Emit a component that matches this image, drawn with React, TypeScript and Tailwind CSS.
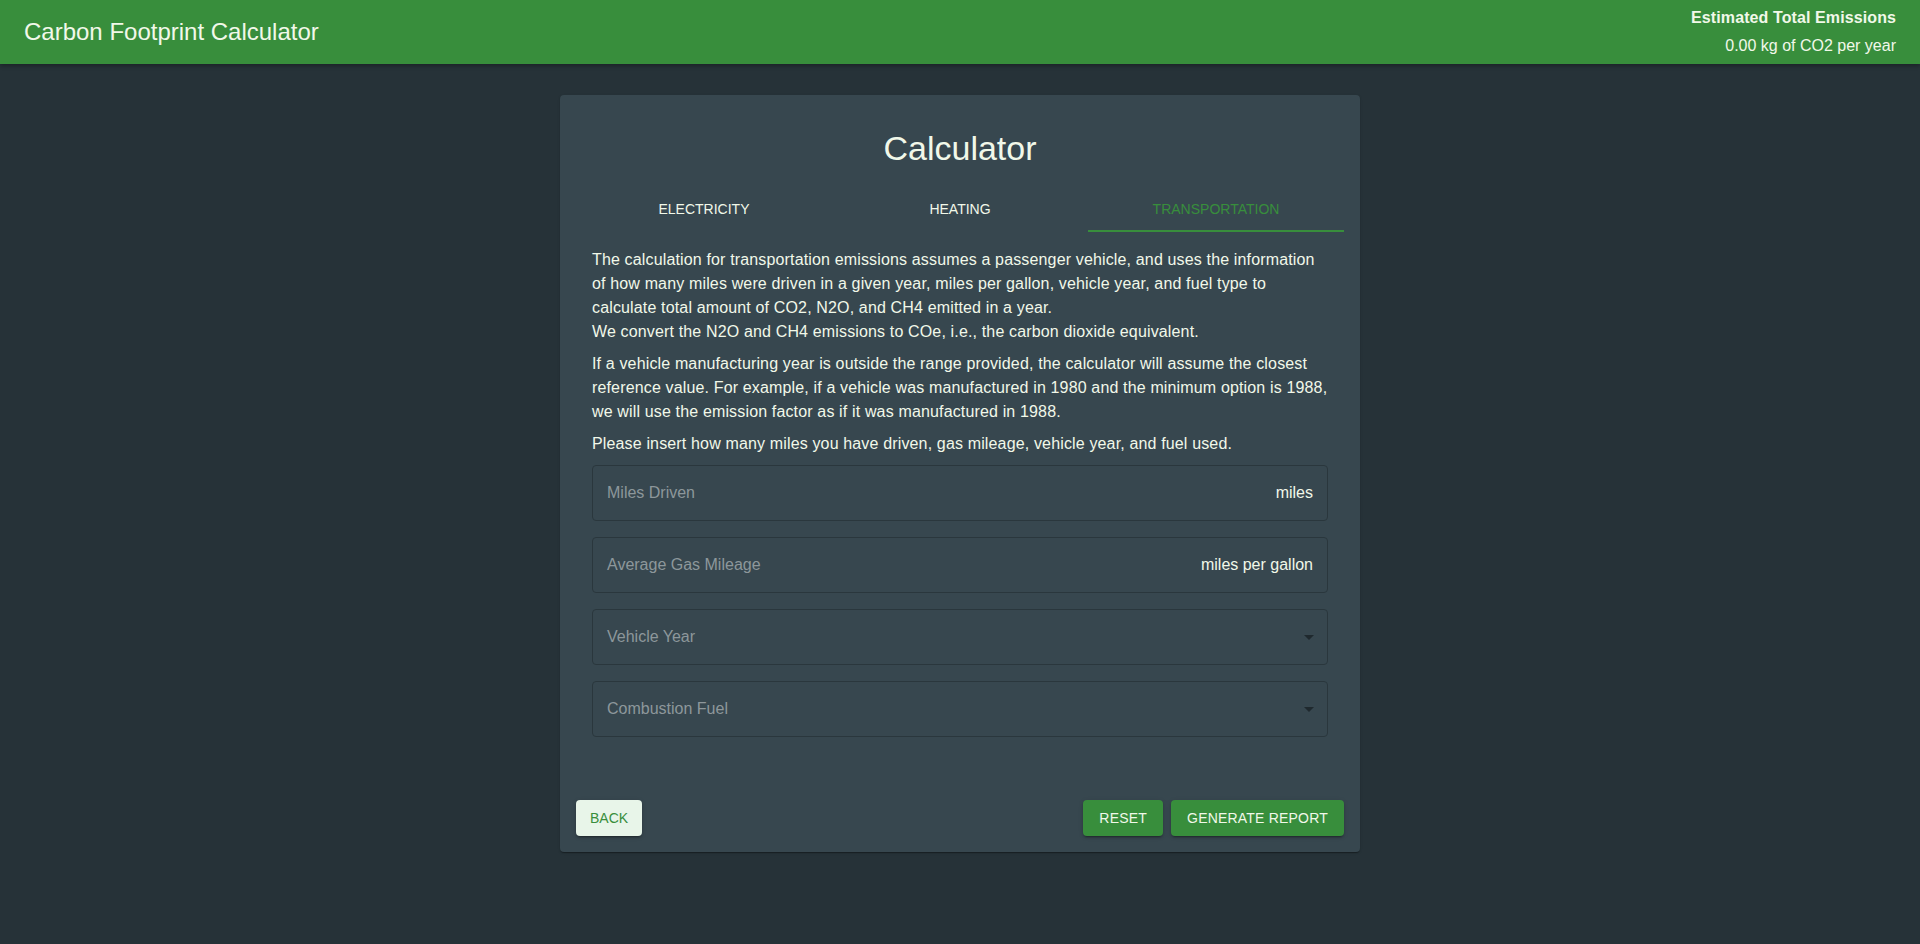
import React from "react";

const FONT = { fontFamily: '"Liberation Sans", Arial, Helvetica, sans-serif' };

const TABS = ["Electricity", "Heating", "Transportation"];

const BTN_SHADOW =
  "shadow-[0_3px_1px_-2px_rgba(0,0,0,0.2),0_2px_2px_0_rgba(0,0,0,0.14),0_1px_5px_0_rgba(0,0,0,0.12)]";

function TextField({ label, unit }: { label: string; unit: string }) {
  return (
    <div className="flex h-14 items-center justify-between rounded border border-[#2a373d] px-[14px] text-base">
      <span className="text-[#8d979b]">{label}</span>
      <span className="text-[#f1f8e9]">{unit}</span>
    </div>
  );
}

function SelectField({ label }: { label: string }) {
  return (
    <div className="flex h-14 items-center justify-between rounded border border-[#2a373d] pl-[14px] pr-[6px] text-base">
      <span className="text-[#8d979b]">{label}</span>
      <svg viewBox="0 0 24 24" className="size-6 fill-[#1f292e]">
        <path d="M7 10l5 5 5-5z" />
      </svg>
    </div>
  );
}

export default function App() {
  const active = 2;
  return (
    <div className="min-h-screen bg-[#263238] text-[#f1f8e9]" style={FONT}>
      <header className="flex h-16 items-start justify-between bg-[#388e3c] px-6 shadow-[0_2px_4px_rgba(0,0,0,0.3)]">
        <h1 className="self-center text-2xl leading-8">Carbon Footprint Calculator</h1>
        <div className="flex flex-col items-end pt-2">
          <p className="text-base font-bold leading-5 tracking-[0.1px]">Estimated Total Emissions</p>
          <p className="mt-2 text-base leading-5">0.00 kg of CO2 per year</p>
        </div>
      </header>

      <main className="flex justify-center pt-[31px]">
        <div className="w-[800px] rounded bg-[#37474f] p-4 shadow-[0_2px_1px_-1px_rgba(0,0,0,0.2),0_1px_1px_0_rgba(0,0,0,0.14),0_1px_3px_0_rgba(0,0,0,0.12)]">
          <h2 className="mt-4 mb-[15px] text-center text-[34px] leading-[42px]">Calculator</h2>

          <div className="grid grid-cols-3">
            {TABS.map((tab, i) => (
              <div
                key={tab}
                className={
                  i === active
                    ? "flex h-12 items-center justify-center border-b-2 border-[#388e3c] pt-[4px] text-sm uppercase text-[#388e3c]"
                    : "flex h-12 items-center justify-center pt-[2px] text-sm uppercase text-[#f1f8e9]"
                }
              >
                {tab}
              </div>
            ))}
          </div>

          <div className="px-4 pt-4 tracking-[0.15px]">
            <p className="mb-2 whitespace-nowrap text-base leading-6">
              The calculation for transportation emissions assumes a passenger vehicle, and uses the information
              <br />
              of how many miles were driven in a given year, miles per gallon, vehicle year, and fuel type to
              <br />
              calculate total amount of CO2, N2O, and CH4 emitted in a year.
              <br />
              We convert the N2O and CH4 emissions to COe, i.e., the carbon dioxide equivalent.
            </p>
            <p className="mb-2 whitespace-nowrap text-base leading-6">
              If a vehicle manufacturing year is outside the range provided, the calculator will assume the closest
              <br />
              reference value. For example, if a vehicle was manufactured in 1980 and the minimum option is 1988,
              <br />
              we will use the emission factor as if it was manufactured in 1988.
            </p>
            <p className="whitespace-nowrap text-base leading-6">
              Please insert how many miles you have driven, gas mileage, vehicle year, and fuel used.
            </p>

            <div className="mt-[9px] flex flex-col gap-4 tracking-normal">
              <TextField label="Miles Driven" unit="miles" />
              <TextField label="Average Gas Mileage" unit="miles per gallon" />
              <SelectField label="Vehicle Year" />
              <SelectField label="Combustion Fuel" />
            </div>
          </div>

          <div className="mt-[63px] flex items-center justify-between">
            <button className={`h-9 rounded bg-[#e8f5e9] px-[14px] text-sm uppercase text-[#388e3c] ${BTN_SHADOW}`}>
              Back
            </button>
            <div className="flex gap-2">
              <button className={`h-9 rounded bg-[#388e3c] px-4 text-sm uppercase tracking-[0.2px] text-[#f1f8e9] ${BTN_SHADOW}`}>
                Reset
              </button>
              <button className={`h-9 rounded bg-[#388e3c] px-4 text-sm uppercase tracking-[0.2px] text-[#f1f8e9] ${BTN_SHADOW}`}>
                Generate Report
              </button>
            </div>
          </div>
        </div>
      </main>
    </div>
  );
}
